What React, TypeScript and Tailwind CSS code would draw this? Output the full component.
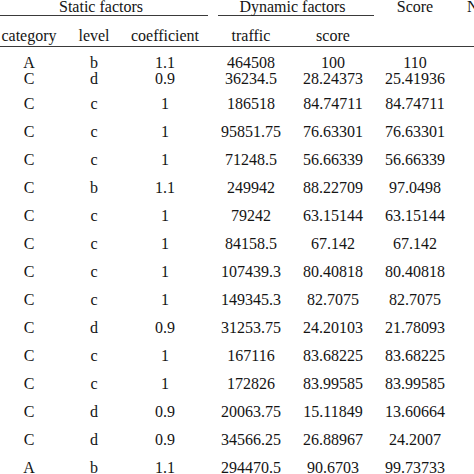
import React from "react";

const rows: string[][] = [
  ["A", "b", "1.1", "464508", "100", "110"],
  ["C", "d", "0.9", "36234.5", "28.24373", "25.41936"],
  ["C", "c", "1", "186518", "84.74711", "84.74711"],
  ["C", "c", "1", "95851.75", "76.63301", "76.63301"],
  ["C", "c", "1", "71248.5", "56.66339", "56.66339"],
  ["C", "b", "1.1", "249942", "88.22709", "97.0498"],
  ["C", "c", "1", "79242", "63.15144", "63.15144"],
  ["C", "c", "1", "84158.5", "67.142", "67.142"],
  ["C", "c", "1", "107439.3", "80.40818", "80.40818"],
  ["C", "c", "1", "149345.3", "82.7075", "82.7075"],
  ["C", "d", "0.9", "31253.75", "24.20103", "21.78093"],
  ["C", "c", "1", "167116", "83.68225", "83.68225"],
  ["C", "c", "1", "172826", "83.99585", "83.99585"],
  ["C", "d", "0.9", "20063.75", "15.11849", "13.60664"],
  ["C", "d", "0.9", "34566.25", "26.88967", "24.2007"],
  ["A", "b", "1.1", "294470.5", "90.6703", "99.73733"],
];

const gridCols = "grid grid-cols-[58px_72px_70px_102px_62px_102px_1fr]";

function Row({ cells, h }: { cells: string[]; h: string }) {
  return (
    <div className={`${gridCols} ${h}`}>
      {cells.map((c, i) => (
        <div key={i} className="text-center">
          {c}
        </div>
      ))}
      <div />
    </div>
  );
}

export default function App() {
  return (
    <div
      className="w-[474px] h-[474px] overflow-hidden bg-white text-[#141414] text-[16px] whitespace-nowrap"
      style={{ fontFamily: '"Liberation Serif", "Times New Roman", serif' }}
    >
      {/* top header row */}
      <div className="flex h-[16px] leading-[14px]">
        <div className="w-[208px] shrink-0 h-[16px] text-center border-b border-[#3a3a3a] pr-[6px]">
          Static factors
        </div>
        <div className="w-[156px] shrink-0 ml-[10px] h-[16px] text-center border-b border-[#3a3a3a] pr-[7px]">
          Dynamic factors
        </div>
        <div className="w-[82px] shrink-0 text-center">Score</div>
        <div className="shrink-0 pl-[11px]">Normalized</div>
      </div>
      {/* second header row */}
      <div className={`${gridCols} h-[31px] pt-[10px] leading-[20px] border-b border-[#3a3a3a]`}>
        <div className="text-center">category</div>
        <div className="text-center">level</div>
        <div className="text-center">coefficient</div>
        <div className="text-center">traffic</div>
        <div className="text-center">score</div>
        <div />
        <div />
      </div>
      {/* body */}
      <div className="flex flex-col pt-[8px]">
        <Row cells={rows[0]} h="h-[16px] leading-[16px]" />
        <Row cells={rows[1]} h="h-[16px] leading-[16px]" />
        <div className="flex flex-col pt-[3px]">
          {rows.slice(2).map((r, i) => (
            <Row key={i} cells={r} h="h-[28px] leading-[28px]" />
          ))}
        </div>
      </div>
    </div>
  );
}
